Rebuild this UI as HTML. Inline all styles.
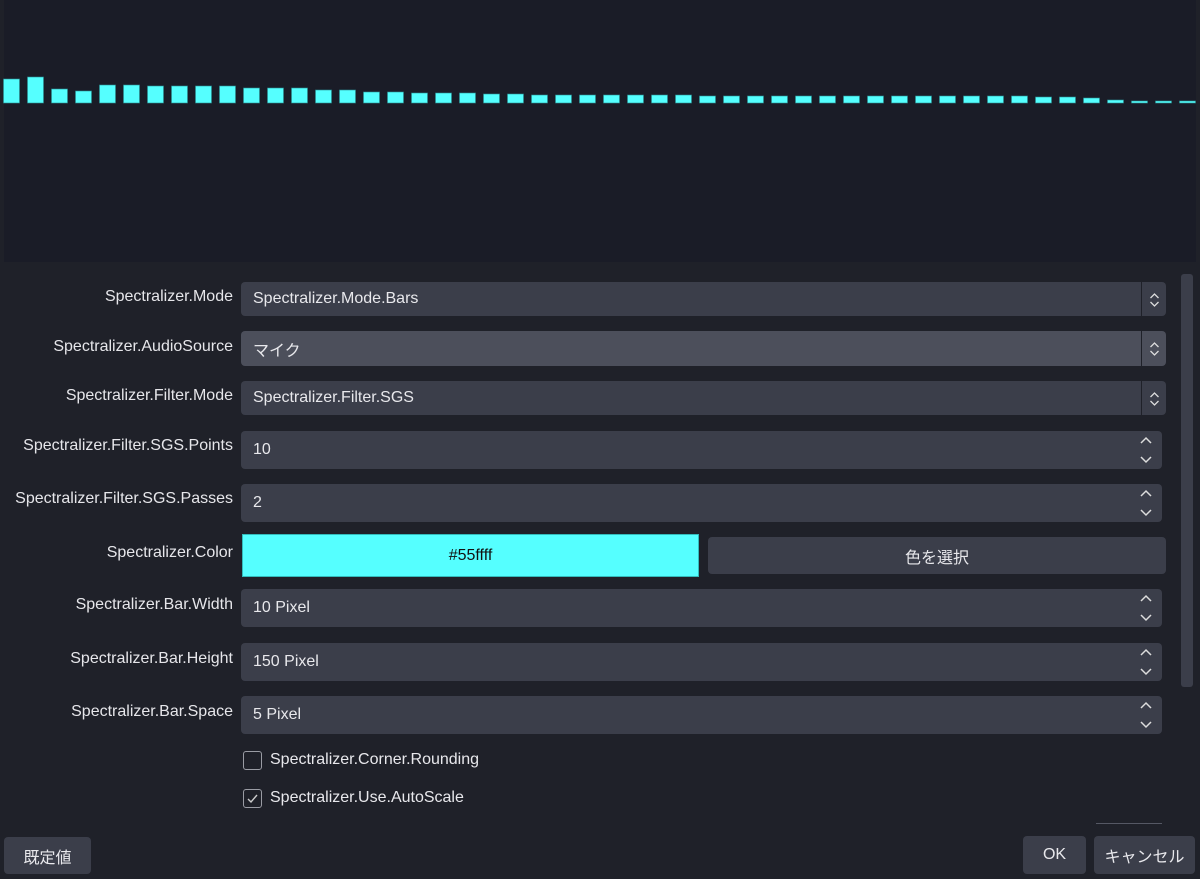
<!DOCTYPE html>
<html><head><meta charset="utf-8"><style>
*{margin:0;padding:0;box-sizing:border-box}
body{width:1200px;height:879px;background:#1f2129;font-family:"Liberation Sans","Noto Sans CJK JP",sans-serif;color:#e8e8ec;font-size:16px;position:relative;overflow:hidden}
.a{position:absolute}
.lbl{position:absolute;right:967px;text-align:right;white-space:nowrap;color:#e6e6ea}
.f{position:absolute;left:241px;background:#3b3e4a;border-radius:4px;padding-left:12px;display:flex;align-items:center}
.arr{position:absolute;right:0;top:0;bottom:0;width:25px;border-left:1px solid #1f2129}
.btn{position:absolute;background:#3b3e4a;border-radius:4px;display:flex;align-items:center;justify-content:center}
.cb{position:absolute;left:243px;width:19px;height:19px;border:1.5px solid #9a9ca4;border-radius:3px}
</style></head><body>
<div class="a" style="left:4px;top:0;width:1192px;height:262px;background:#1a1c27"></div>
<svg class="a" style="left:0;top:0" width="1200" height="110">
<g fill="#55ffff" stroke="#2a8f93" stroke-width="0.6">
<rect x="3.5" y="79" width="16" height="24"/><rect x="27.5" y="77" width="16" height="26"/><rect x="51.5" y="89" width="16" height="14"/><rect x="75.5" y="91" width="16" height="12"/><rect x="99.5" y="85" width="16" height="18"/><rect x="123.5" y="85" width="16" height="18"/><rect x="147.5" y="86" width="16" height="17"/><rect x="171.5" y="86" width="16" height="17"/><rect x="195.5" y="86" width="16" height="17"/><rect x="219.5" y="86" width="16" height="17"/><rect x="243.5" y="88" width="16" height="15"/><rect x="267.5" y="88" width="16" height="15"/><rect x="291.5" y="88" width="16" height="15"/><rect x="315.5" y="90" width="16" height="13"/><rect x="339.5" y="90" width="16" height="13"/><rect x="363.5" y="92" width="16" height="11"/><rect x="387.5" y="92" width="16" height="11"/><rect x="411.5" y="93" width="16" height="10"/><rect x="435.5" y="93" width="16" height="10"/><rect x="459.5" y="93" width="16" height="10"/><rect x="483.5" y="94" width="16" height="9"/><rect x="507.5" y="94" width="16" height="9"/><rect x="531.5" y="95" width="16" height="8"/><rect x="555.5" y="95" width="16" height="8"/><rect x="579.5" y="95" width="16" height="8"/><rect x="603.5" y="95" width="16" height="8"/><rect x="627.5" y="95" width="16" height="8"/><rect x="651.5" y="95" width="16" height="8"/><rect x="675.5" y="95" width="16" height="8"/><rect x="699.5" y="96" width="16" height="7"/><rect x="723.5" y="96" width="16" height="7"/><rect x="747.5" y="96" width="16" height="7"/><rect x="771.5" y="96" width="16" height="7"/><rect x="795.5" y="96" width="16" height="7"/><rect x="819.5" y="96" width="16" height="7"/><rect x="843.5" y="96" width="16" height="7"/><rect x="867.5" y="96" width="16" height="7"/><rect x="891.5" y="96" width="16" height="7"/><rect x="915.5" y="96" width="16" height="7"/><rect x="939.5" y="96" width="16" height="7"/><rect x="963.5" y="96" width="16" height="7"/><rect x="987.5" y="96" width="16" height="7"/><rect x="1011.5" y="96" width="16" height="7"/><rect x="1035.5" y="97" width="16" height="6"/><rect x="1059.5" y="97" width="16" height="6"/><rect x="1083.5" y="98" width="16" height="5"/><rect x="1107.5" y="100" width="16" height="3"/><rect x="1131.5" y="101" width="16" height="2"/><rect x="1155.5" y="101" width="16" height="2"/><rect x="1179.5" y="101" width="16" height="2"/>
</g></svg>

<div class="a" style="left:1181px;top:274px;width:12px;height:413px;background:#3b3e4a;border-radius:3px"></div>

<div class="lbl" style="top:288px">Spectralizer.Mode</div>
<div class="f" style="top:282px;width:925px;height:34px">Spectralizer.Mode.Bars<div class="arr"><svg width="25" height="34"><path d="M8.5 16 L12.5 12 L16.5 16 M8.5 20 L12.5 24 L16.5 20" fill="none" stroke="#ddd" stroke-width="1.3"/></svg></div></div>

<div class="lbl" style="top:338px">Spectralizer.AudioSource</div>
<div class="f" style="top:331px;width:925px;height:35px;background:#4c4f5b">マイク<div class="arr"><svg width="25" height="35"><path d="M8.5 16 L12.5 12 L16.5 16 M8.5 20 L12.5 24 L16.5 20" fill="none" stroke="#ddd" stroke-width="1.3"/></svg></div></div>

<div class="lbl" style="top:387px">Spectralizer.Filter.Mode</div>
<div class="f" style="top:381px;width:925px;height:34px">Spectralizer.Filter.SGS<div class="arr"><svg width="25" height="34"><path d="M8.5 16 L12.5 12 L16.5 16 M8.5 20 L12.5 24 L16.5 20" fill="none" stroke="#ddd" stroke-width="1.3"/></svg></div></div>

<div class="lbl" style="top:437px">Spectralizer.Filter.SGS.Points</div>
<div class="f" style="top:431px;width:921px;height:38px">10<svg class="a" style="right:8px;top:0" width="16" height="38"><path d="M3 12 L8 7 L13 12 M3 26 L8 31 L13 26" fill="none" stroke="#ddd" stroke-width="1.5"/></svg></div>

<div class="lbl" style="top:490px">Spectralizer.Filter.SGS.Passes</div>
<div class="f" style="top:484px;width:921px;height:38px">2<svg class="a" style="right:8px;top:0" width="16" height="38"><path d="M3 12 L8 7 L13 12 M3 26 L8 31 L13 26" fill="none" stroke="#ddd" stroke-width="1.5"/></svg></div>

<div class="lbl" style="top:544px">Spectralizer.Color</div>
<div class="a" style="left:242px;top:534px;width:457px;height:43px;background:#55ffff;border:1px solid #3bb;color:#111;display:flex;align-items:center;justify-content:center">#55ffff</div>
<div class="btn" style="left:708px;top:537px;width:458px;height:37px">色を選択</div>

<div class="lbl" style="top:596px">Spectralizer.Bar.Width</div>
<div class="f" style="top:589px;width:921px;height:38px">10 Pixel<svg class="a" style="right:8px;top:0" width="16" height="38"><path d="M3 12 L8 7 L13 12 M3 26 L8 31 L13 26" fill="none" stroke="#ddd" stroke-width="1.5"/></svg></div>

<div class="lbl" style="top:650px">Spectralizer.Bar.Height</div>
<div class="f" style="top:643px;width:921px;height:38px">150 Pixel<svg class="a" style="right:8px;top:0" width="16" height="38"><path d="M3 12 L8 7 L13 12 M3 26 L8 31 L13 26" fill="none" stroke="#ddd" stroke-width="1.5"/></svg></div>

<div class="lbl" style="top:703px">Spectralizer.Bar.Space</div>
<div class="f" style="top:696px;width:921px;height:38px">5 Pixel<svg class="a" style="right:8px;top:0" width="16" height="38"><path d="M3 12 L8 7 L13 12 M3 26 L8 31 L13 26" fill="none" stroke="#ddd" stroke-width="1.5"/></svg></div>

<div class="cb" style="top:751px"></div>
<div class="a" style="left:270px;top:751px">Spectralizer.Corner.Rounding</div>
<div class="cb" style="top:789px"><svg class="a" style="left:1px;top:1px" width="15" height="15"><path d="M3 8 L6 11 L12 4" fill="none" stroke="#ccc" stroke-width="1.4"/></svg></div>
<div class="a" style="left:270px;top:789px">Spectralizer.Use.AutoScale</div>

<div class="a" style="left:1096px;top:823px;width:66px;height:1px;background:#555864"></div>
<div class="btn" style="left:4px;top:837px;width:87px;height:37px">既定値</div>
<div class="btn" style="left:1023px;top:836px;width:63px;height:38px">OK</div>
<div class="btn" style="left:1094px;top:836px;width:101px;height:38px">キャンセル</div>
</body></html>
